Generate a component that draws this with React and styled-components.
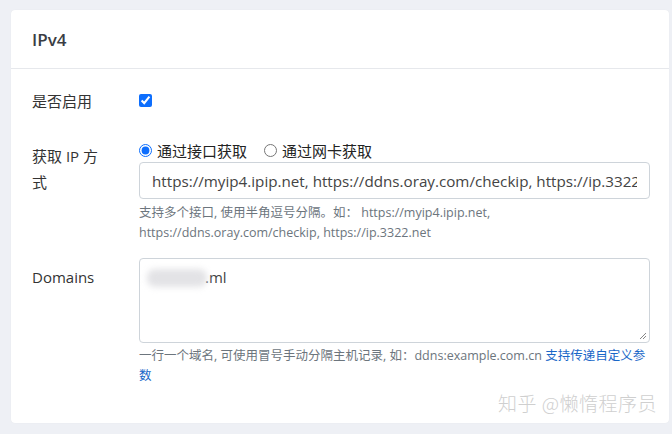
import styled, { createGlobalStyle } from 'styled-components';

const GlobalStyle = createGlobalStyle`
  html, body {
    margin: 0;
    padding: 0;
    background: #eef0f5;
  }
  body {
    font-family: "Open Sans", "Noto Sans CJK SC", sans-serif;
    color: #212529;
  }
`;

const Page = styled.div`
  width: 672px;
  height: 434px;
  padding: 10px 3px 11px 11px;
  box-sizing: border-box;
  overflow: hidden;
`;

const Card = styled.section`
  position: relative;
  height: 100%;
  background: #fff;
  border-radius: 4px;
  box-shadow: 0 0 1px rgba(0, 0, 0, 0.08);
`;

const CardHeader = styled.header`
  height: 59px;
  padding: 0 21px;
  display: flex;
  align-items: center;
  border-bottom: 1px solid #e6e8ec;
  box-sizing: border-box;
`;

const Title = styled.h5`
  margin: 0;
  font-size: 17px;
  font-weight: 600;
  color: #3a3d44;
`;

const CardBody = styled.div`
  padding: 19px 19px 0 21px;
  display: flex;
  flex-direction: column;
`;

const Row = styled.div`
  display: grid;
  grid-template-columns: 72px 1fr;
  column-gap: 35px;
  margin-top: ${(p) => p.$gap || 0}px;
`;

const Label = styled.label`
  font-size: 15px;
  line-height: 26px;
  color: #333;
  padding-top: ${(p) => p.$top || 0}px;
`;

const Field = styled.div`
  display: flex;
  flex-direction: column;
  min-width: 0;
`;

const CheckBox = styled.input.attrs({ type: 'checkbox' })`
  margin: 6px 0 0 0;
  width: 13px;
  height: 13px;
  accent-color: #0d6efd;
`;

const RadioLine = styled.div`
  display: flex;
  align-items: center;
  height: 22px;
  gap: 17px;
`;

const RadioOption = styled.label`
  display: flex;
  align-items: center;
  gap: 5px;
  font-size: 15px;
  color: #222;
`;

const Radio = styled.input.attrs({ type: 'radio' })`
  margin: 0;
  width: 13px;
  height: 13px;
  accent-color: #0d6efd;
`;

const TextInput = styled.input`
  margin-top: 1px;
  height: 37px;
  box-sizing: border-box;
  border: 1px solid #ced4da;
  border-radius: 4px;
  padding: 0 12px;
  font-family: "Open Sans", "Noto Sans CJK SC", sans-serif;
  font-size: 15.2px;
  color: #444;
  outline: none;
`;

const TextArea = styled.div`
  position: relative;
  height: 85px;
  box-sizing: border-box;
  border: 1px solid #ced4da;
  border-radius: 4px;
  padding: 7px 12px;
  font-size: 15px;
  line-height: 22px;
  color: #444;
`;

const Blur = styled.span`
  display: inline-block;
  width: 60px;
  height: 18px;
  vertical-align: -4px;
  margin-left: -5px;
  margin-right: -2px;
  border-radius: 8px;
  background: #e3e3e6;
  filter: blur(3px);
`;

const Grip = styled.svg`
  position: absolute;
  right: 2px;
  bottom: 2px;
`;

const Help = styled.div`
  margin-top: ${(p) => p.$top || 4}px;
  font-size: 12.5px;
  line-height: 20px;
  color: #6c757d;
`;

const Link = styled.a`
  color: #1967c8;
  text-decoration: none;
`;

const Watermark = styled.div`
  position: absolute;
  right: 12px;
  bottom: 7px;
  font-family: "Noto Sans CJK SC", sans-serif;
  font-size: 19px;
  font-weight: 300;
  letter-spacing: 0.5px;
  color: #cfcfcf;
`;

export default function App() {
  return (
    <Page>
      <GlobalStyle />
      <Card>
        <CardHeader>
          <Title>IPv4</Title>
        </CardHeader>
        <CardBody>
          <Row>
            <Label>是否启用</Label>
            <Field>
              <CheckBox defaultChecked />
            </Field>
          </Row>
          <Row $gap={25}>
            <Label $top={4}>获取 IP 方式</Label>
            <Field>
              <RadioLine>
                <RadioOption>
                  <Radio name="ipType" defaultChecked />
                  通过接口获取
                </RadioOption>
                <RadioOption>
                  <Radio name="ipType" />
                  通过网卡获取
                </RadioOption>
              </RadioLine>
              <TextInput
                defaultValue="https://myip4.ipip.net, https://ddns.oray.com/checkip, https://ip.3322.net"
              />
              <Help>
                支持多个接口, 使用半角逗号分隔。如： https://myip4.ipip.net, https://ddns.oray.com/checkip, https://ip.3322.net
              </Help>
            </Field>
          </Row>
          <Row $gap={15}>
            <Label $top={6}>Domains</Label>
            <Field>
              <TextArea>
                <Blur />.ml
                <Grip width="9" height="9" viewBox="0 0 9 9">
                  <path d="M8 2L2 8M8 5L5 8" stroke="#888" strokeWidth="1" />
                </Grip>
              </TextArea>
              <Help $top={3}>
                一行一个域名, 可使用冒号手动分隔主机记录, 如：ddns:example.com.cn <Link href="#">支持传递自定义参数</Link>
              </Help>
            </Field>
          </Row>
        </CardBody>
        <Watermark>知乎 @懒惰程序员</Watermark>
      </Card>
    </Page>
  );
}
